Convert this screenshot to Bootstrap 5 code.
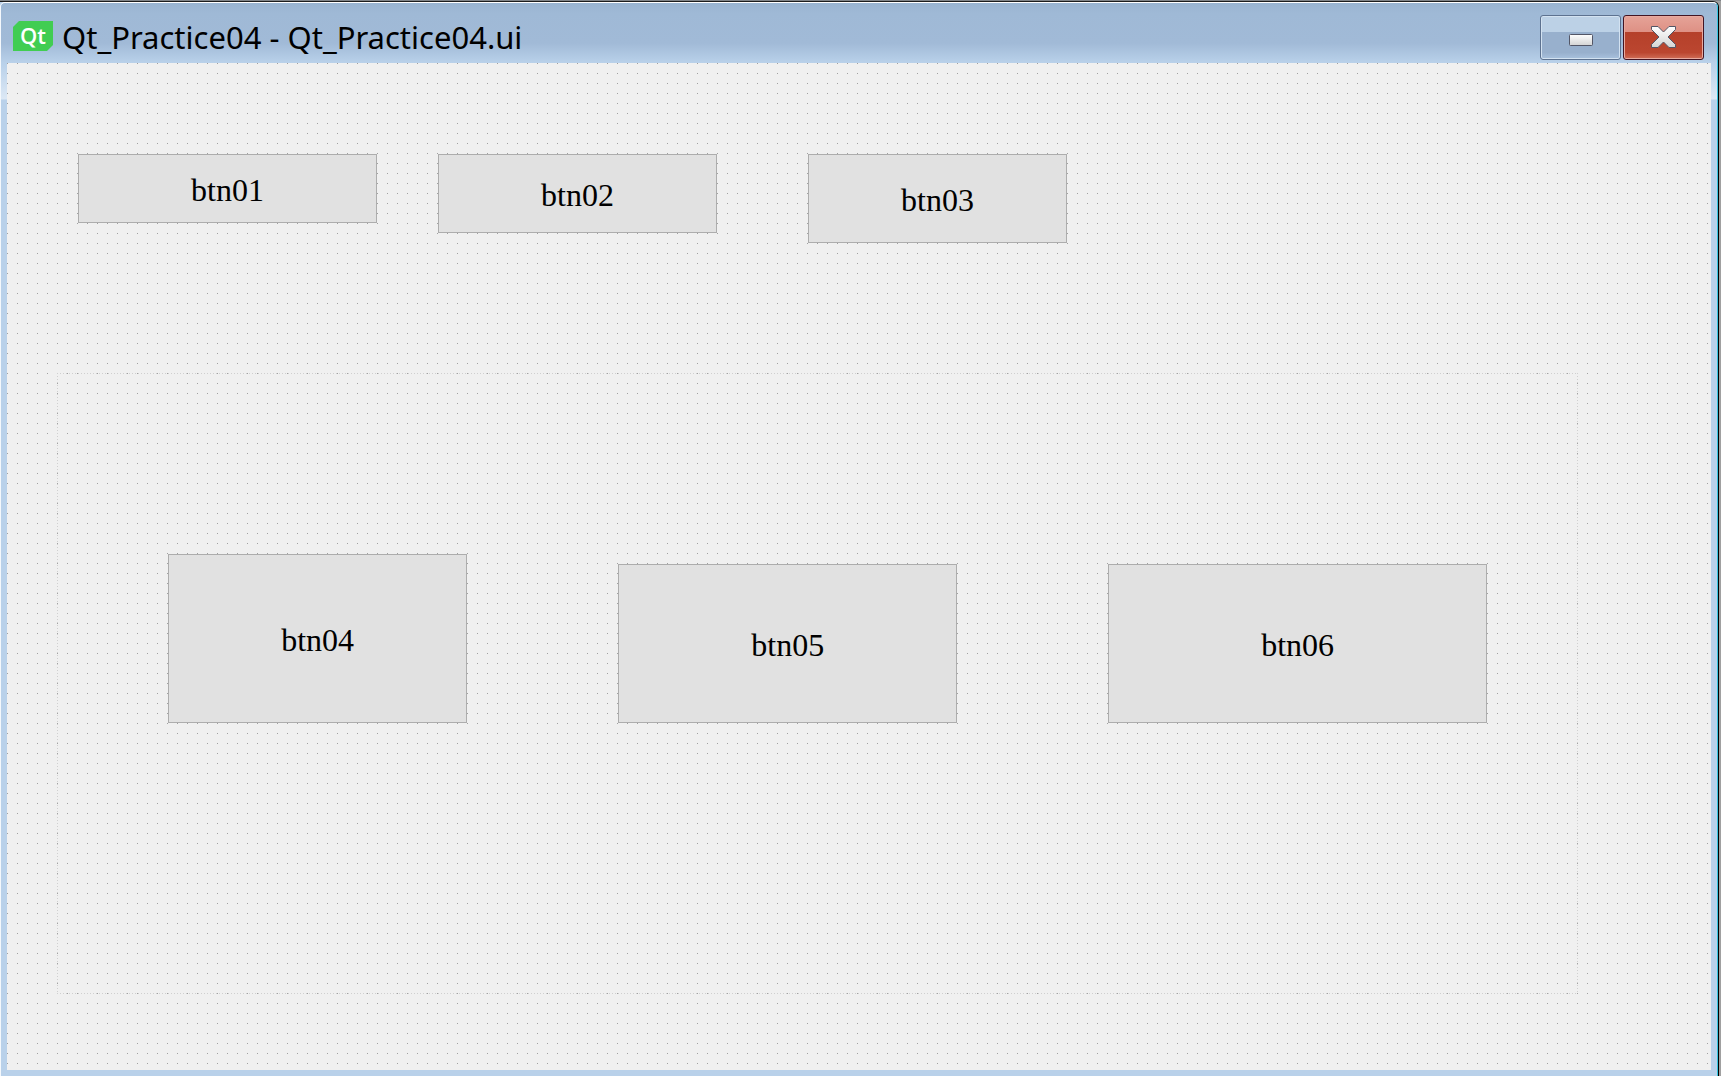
<!DOCTYPE html>
<html lang="en">
<head>
<meta charset="utf-8">
<meta name="viewport" content="width=device-width, initial-scale=1">
<title>Qt_Practice04 - Qt_Practice04.ui</title>
<link href="https://cdn.jsdelivr.net/npm/bootstrap@5.3.0/dist/css/bootstrap.min.css" rel="stylesheet">
<style>
  body { background: #a0a0a0; border-top: 1px solid #808488; padding-right: 2px; }
  .frame {
    min-height: calc(100vh - 1px);
    border-top: 1px solid #1c1c1c;
    border-right: 1px solid #000;
    border-top-right-radius: 6px;
    background: #b9d1ea;
  }
  .frame-inner {
    border-top: 1px solid #fff;
    border-left: 1px solid #f4f8fc;
    border-right: 1px solid #35c5e0;
    border-radius: 5px 5px 0 0;
    padding: 0 6px 6px;
    background: linear-gradient(#99b4d1, #9fb9d6 10px, #a1bad7 40px, #b9d1ea 60px, #b9d1ea 61px, #dce8f5 96px, #b9d1ea 97px, #b9d1ea 100%);
  }
  .title-bar { height: 60px; padding: 0 7px 0 6px; }
  .app-logo { width: 40px; height: 30px; margin-top: 6px; }
  .title-text {
    font: 400 31px/42px "Noto Sans", "Open Sans", sans-serif;
    color: #000;
    padding: 8px 0 0 9px;
  }
  .win-controls { gap: 2px; }
  .win-btn {
    width: 81px; height: 45px;
    border: 1px solid #5d7290; border-radius: 3px;
    box-shadow: inset 0 0 0 1px #d3e2f1;
    background: linear-gradient(#bcd1e6 0 38%, #98b0cd 38% 85%, #a9c2de);
  }
  .win-min { padding: 6px 0 0; }
  .win-close {
    padding: 0;
    border-color: #431422;
    box-shadow: inset 0 0 0 1px #e8aaa0;
    background: linear-gradient(#e5a398, #de9084 38%, #b5402a 38%, #bb4630 85%, #d06e58);
  }
  /* one grey dot at the corner of every 10px cell */
  .design-grid {
    background:
      linear-gradient(90deg, transparent 1px, #f0f0f0 1px) 0 0 / 10px 10px,
      linear-gradient(#a0a0a0 1px, #f0f0f0 1px) 0 0 / 10px 10px;
    padding: 91px 133px 76px 50px;
  }
  .top-row { height: 219px; padding-left: 21px; }
  .layout-box {
    padding: 181px 91px 0 111px;
    background:
      repeating-linear-gradient(90deg, #cfcfcf 0 1px, transparent 1px 3px) 0 0 / 100% 1px no-repeat,
      repeating-linear-gradient(90deg, #cfcfcf 0 1px, transparent 1px 3px) 0 100% / 100% 1px no-repeat,
      repeating-linear-gradient(#cfcfcf 0 1px, transparent 1px 3px) 0 0 / 1px 100% no-repeat,
      repeating-linear-gradient(#cfcfcf 0 1px, transparent 1px 3px) 100% 0 / 1px 100% no-repeat;
  }
  .layout-row { gap: 151px; }
  .form-btn {
    border: 1px solid #adadad; border-radius: 0;
    background: #e1e1e1; color: #000;
    font: 400 32px/36px "Liberation Serif", serif;
    padding: 2px 0 0;
  }
  .form-btn:hover { background: #e5f1fb; border-color: #0078d7; }
  .w-l { flex: 0 1 299px; height: 69px; }
  .w-m { flex: 0 1 279px; height: 79px; margin-left: 61px; }
  .w-s { flex: 0 1 259px; height: 89px; margin-left: 91px; }
  .h-tall { flex: 299 1 0; height: 169px; }
  .h-mid { flex: 339 1 0; height: 159px; }
  .h-wide { flex: 379 1 0; height: 159px; }
</style>
</head>
<body>
<div class="frame d-flex flex-column">
  <div class="frame-inner d-flex flex-column flex-grow-1">
    <header class="title-bar d-flex align-items-center">
      <svg class="app-logo flex-shrink-0 overflow-visible" viewBox="0 0 40 30" role="img" aria-label="Qt">
        <path fill="#41cd52" d="M6 0H40V24L34 30H0V6Z"/>
        <text x="20" y="23" text-anchor="middle" fill="#fff" font-family="Open Sans, sans-serif" font-weight="600" font-size="22">Qt</text>
      </svg>
      <h1 class="title-text m-0 flex-grow-1 text-truncate">Qt_Practice04 - Qt_Practice04.ui</h1>
      <div class="win-controls d-flex mt-3 pb-2">
        <button type="button" class="win-btn win-min d-flex justify-content-center align-items-center" aria-label="Minimize">
          <svg width="24" height="12" viewBox="0 0 24 12"><defs><linearGradient id="g" x2="0" y2="1"><stop stop-color="#fff"/><stop offset="1" stop-color="#d4d4d4"/></linearGradient></defs><rect x=".5" y=".5" width="23" height="11" rx="1" fill="url(#g)" stroke="#535666"/></svg>
        </button>
        <button type="button" class="win-btn win-close d-flex justify-content-center align-items-center" aria-label="Close">
          <svg width="27" height="22" viewBox="0 0 27 22"><path d="M1.500.500H8L13.500 6 19 .500h6.500V3.500L18 11l7.500 7.500v3H19L13.500 16 8 21.500H1.500v-3L9 11 1.500 3.500Z" fill="url(#g)" stroke="#535666" stroke-linejoin="round"/></svg>
        </button>
      </div>
    </header>
    <main class="design-grid d-flex flex-column flex-grow-1">
      <div class="top-row d-flex align-items-start">
        <button type="button" class="form-btn w-l">btn01</button>
        <button type="button" class="form-btn w-m">btn02</button>
        <button type="button" class="form-btn w-s">btn03</button>
      </div>
      <section class="layout-box flex-grow-1">
        <div class="layout-row d-flex align-items-end">
          <button type="button" class="form-btn h-tall">btn04</button>
          <button type="button" class="form-btn h-mid">btn05</button>
          <button type="button" class="form-btn h-wide">btn06</button>
        </div>
      </section>
    </main>
  </div>
</div>
<script src="https://cdn.jsdelivr.net/npm/bootstrap@5.3.0/dist/js/bootstrap.bundle.min.js"></script>
</body>
</html>
